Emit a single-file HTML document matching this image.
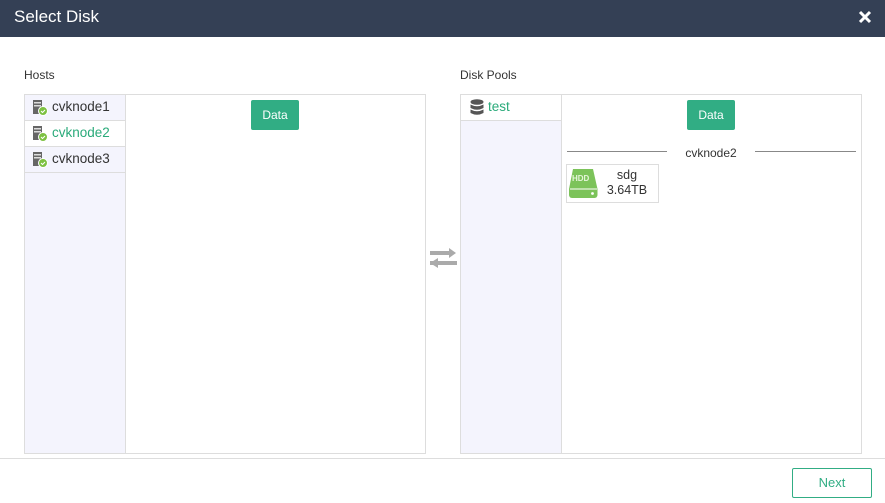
<!DOCTYPE html><html><head><style>
body{margin:0;width:885px;height:503px;background:#fff;font-family:"Liberation Sans",sans-serif;position:relative;overflow:hidden}
.hd{position:absolute;left:0;top:0;width:885px;height:37px;background:#344055;color:#fff;font-size:17px;line-height:34px}
.hd span{position:absolute;left:14px}
.lbl{position:absolute;top:68px;font-size:12px;color:#333}
.pan{position:absolute;top:94px;width:400px;height:358px;border:1px solid #ddd}
.side{position:absolute;left:0;top:0;width:100px;height:100%;background:#f4f4fd;border-right:1px solid #ddd}
.it{height:25px;border-bottom:1px solid #ddd;font-size:13.5px;color:#333;line-height:24px;padding-left:27px;position:relative}
.it.sel{background:#fff;color:#2aaa7a}
.btn{position:absolute;top:5px;width:48px;height:30px;background:#31ad84;color:#fff;font-size:12px;line-height:30px;text-align:center;border-radius:2px}
svg{position:absolute}
</style></head><body>
<div class="hd"><span>Select Disk</span>
<svg style="left:858px;top:10px" width="14" height="14" viewBox="0 0 14 14"><path d="M2 2L12 12M12 2L2 12" stroke="#fff" stroke-width="3"/></svg></div>
<div class="lbl" style="left:24px">Hosts</div>
<div class="lbl" style="left:460px">Disk Pools</div>
<div class="pan" style="left:24px">
<div class="side">
<div class="it">cvknode1<svg style="left:7px;top:5px" width="16" height="16"><rect x="1" y="0" width="9" height="14" fill="#666"/><rect x="2" y="2" width="7" height="1.5" fill="#ddd"/><rect x="2" y="5" width="7" height="1.5" fill="#ddd"/><circle cx="11" cy="11" r="4.5" fill="#7dc142" stroke="#fff"/><path d="M9 11l1.5 1.5 2.5-2.5" stroke="#fff" fill="none"/></svg></div>
<div class="it sel">cvknode2<svg style="left:7px;top:5px" width="16" height="16"><rect x="1" y="0" width="9" height="14" fill="#666"/><rect x="2" y="2" width="7" height="1.5" fill="#ddd"/><rect x="2" y="5" width="7" height="1.5" fill="#ddd"/><circle cx="11" cy="11" r="4.5" fill="#7dc142" stroke="#fff"/><path d="M9 11l1.5 1.5 2.5-2.5" stroke="#fff" fill="none"/></svg></div>
<div class="it">cvknode3<svg style="left:7px;top:5px" width="16" height="16"><rect x="1" y="0" width="9" height="14" fill="#666"/><rect x="2" y="2" width="7" height="1.5" fill="#ddd"/><rect x="2" y="5" width="7" height="1.5" fill="#ddd"/><circle cx="11" cy="11" r="4.5" fill="#7dc142" stroke="#fff"/><path d="M9 11l1.5 1.5 2.5-2.5" stroke="#fff" fill="none"/></svg></div>
</div>
<div class="btn" style="left:226px">Data</div>
</div>
<svg style="left:430px;top:248px" width="27" height="20"><path d="M0 5h20M0 15h27" stroke="#aaa" stroke-width="4"/><path d="M19 0l7 5-7 5z M8 10l-8 5 8 5z" fill="#aaa"/></svg>
<div class="pan" style="left:460px">
<div class="side">
<div class="it sel" style="color:#2aaa7a">test<svg style="left:9px;top:4px" width="14" height="17"><ellipse cx="7" cy="3" rx="6.5" ry="2.8" fill="#555"/><path d="M0.5 5.5q6.5 3.5 13 0v3.5q-6.5 3.5-13 0zM0.5 10.5q6.5 3.5 13 0v3.5q-6.5 3.5-13 0z" fill="#555"/></svg></div>
</div>
<div class="btn" style="left:226px">Data</div>
<div style="position:absolute;left:106px;top:56px;width:100px;border-top:1px solid #888"></div>
<div style="position:absolute;left:294px;top:56px;width:101px;border-top:1px solid #888"></div>
<div style="position:absolute;left:206px;top:51px;width:88px;text-align:center;font-size:12px;color:#333">cvknode2</div>
<div style="position:absolute;left:105px;top:69px;width:91px;height:37px;border:1px solid #ddd">
<svg style="left:2px;top:4px" width="29" height="30"><path d="M4 0h20l4.5 20v6a3 3 0 0 1-3 3H3a3 3 0 0 1-3-3v-6z" fill="#7cc35a"/><path d="M1 20h27" stroke="#fff"/><circle cx="23.5" cy="24.5" r="1.4" fill="#fff"/><text x="3" y="12" font-size="8" font-weight="bold" fill="#e6f5da" font-family="Liberation Sans">HDD</text></svg>
<div style="position:absolute;left:36px;top:3px;width:48px;text-align:center;font-size:12.5px;color:#333;line-height:15px">sdg<br>3.64TB</div>
</div>
</div>
<div style="position:absolute;left:0;top:458px;width:885px;border-top:1px solid #ddd"></div>
<div style="position:absolute;left:792px;top:468px;width:78px;height:28px;border:1px solid #31ad84;border-radius:2px;color:#31ad84;font-size:13px;text-align:center;line-height:28px">Next</div>
</body></html>
